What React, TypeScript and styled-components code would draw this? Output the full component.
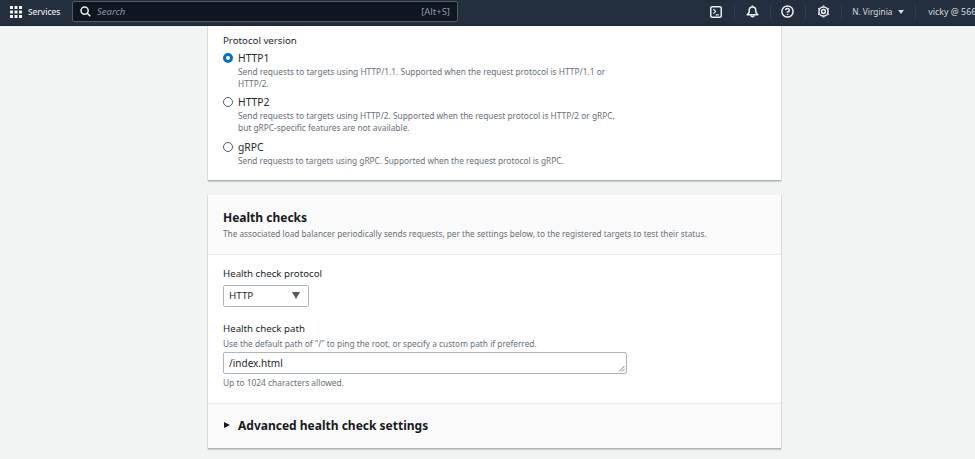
import React from "react";
import styled, { createGlobalStyle } from "styled-components";

const GlobalStyle = createGlobalStyle`
  html, body {
    margin: 0;
    padding: 0;
    height: 100%;
    overflow: hidden;
    background: #f2f3f3;
    font-family: "Noto Sans", "Open Sans", sans-serif;
  }
  * { box-sizing: border-box; }
`;

const Page = styled.div`
  width: 975px;
  height: 459px;
  overflow: hidden;
  display: flex;
  flex-direction: column;
`;

const NavBar = styled.header`
  height: 26px;
  flex: none;
  background: #232f3e;
  display: flex;
  align-items: center;
  white-space: nowrap;
  overflow: hidden;
  padding-bottom: 2px;
  border-bottom: 1px solid #1b2633;
`;

const ServicesButton = styled.div`
  flex: none;
  display: flex;
  align-items: center;
  gap: 6px;
  width: 72px;
  padding-left: 10px;
  color: #eaeded;
  font-size: 8.3px;
  font-weight: 500;
`;

const SearchBox = styled.div`
  flex: none;
  width: 386px;
  height: 21px;
  background: #10161f;
  border: 1px solid #545b64;
  border-radius: 2px;
  display: flex;
  align-items: center;
  padding: 0 7px;
  color: #8d99a8;
  font-size: 9.5px;
`;

const SearchHint = styled.span`
  font-style: italic;
  margin-left: 6px;
  flex: 1;
`;

const NavIcons = styled.div`
  flex: none;
  display: flex;
  align-items: center;
  margin-left: 241px;
`;

const NavIcon = styled.div`
  width: 35.8px;
  height: 16px;
  display: flex;
  align-items: center;
  justify-content: center;
  border-right: 1px solid #2f3c4c;
  color: #eaeded;
`;

const Region = styled.div`
  flex: none;
  display: flex;
  align-items: center;
  gap: 5px;
  width: 74px;
  padding-left: 10px;
  height: 16px;
  color: #d5dbdb;
  font-size: 8.3px;
  border-right: 1px solid #2f3c4c;
`;

const Account = styled.div`
  flex: none;
  color: #d5dbdb;
  font-size: 8.9px;
  margin-left: 12px;
`;

const Caret = styled.span`
  width: 0;
  height: 0;
  border-left: 3.5px solid transparent;
  border-right: 3.5px solid transparent;
  border-top: 4.5px solid #d5dbdb;
`;

const Content = styled.main`
  flex: 1;
  padding-left: 208px;
  width: 781px;
  display: flex;
  flex-direction: column;
  gap: 14px;
`;

const Panel = styled.section`
  background: #fff;
  border-bottom: 1px solid #aab7b8;
  box-shadow: 0 1px 1px rgba(0, 28, 36, 0.16), -1px 0 0 rgba(0, 28, 36, 0.07), 1px 0 0 rgba(0, 28, 36, 0.07);
`;

const ProtocolPanel = styled(Panel)`
  height: 155px;
  padding: 8px 15px 0;
`;

const FieldLabel = styled.div`
  color: #22262c;
  font-size: 9.7px;
  line-height: 13px;
`;

const RadioRow = styled.div<{ $gap: number }>`
  display: flex;
  gap: 5px;
  margin-top: ${(p) => p.$gap}px;
`;

const RadioMark = styled.span<{ $checked?: boolean }>`
  width: 10px;
  height: 10px;
  margin-top: 1px;
  flex: none;
  border-radius: 50%;
  background: #fff;
  border: ${(p) => (p.$checked ? "3px solid #0073bb" : "1px solid #545b64")};
`;

const RadioTitle = styled.div`
  color: #22262c;
  font-size: 10.3px;
  line-height: 13px;
  margin-bottom: 1px;
`;

const HelpText = styled.div<{ $size?: number }>`
  color: #687078;
  font-size: ${(p) => p.$size ?? 8.38}px;
  line-height: 12px;
  white-space: nowrap;
`;

const HeaderHelp = styled(HelpText)`
  font-size: 8.25px;
  margin-top: 2px;
`;

const PathHelp = styled(HelpText)`
  margin-top: 3px;
  font-size: 8.32px;
`;

const HealthPanel = styled(Panel)`
  height: 254px;
  display: flex;
  flex-direction: column;
`;

const PanelHeader = styled.div`
  height: 60px;
  flex: none;
  background: #fafafa;
  border-bottom: 1px solid #eaeded;
  padding: 15px 15px 0;
`;

const PanelTitle = styled.h2`
  margin: 0;
  color: #16191f;
  font-size: 12px;
  line-height: 16px;
  font-weight: 700;
`;

const PanelBody = styled.div`
  flex: 1;
  padding: 12px 15px 0;
`;

const SelectBox = styled.div`
  width: 86px;
  height: 22px;
  margin-top: 5px;
  border: 1px solid #aab7b8;
  border-radius: 2px;
  display: flex;
  align-items: center;
  justify-content: space-between;
  padding: 0 8px 1px 5px;
  color: #22262c;
  font-size: 9.8px;
`;

const SelectCaret = styled.span`
  width: 0;
  height: 0;
  border-left: 4px solid transparent;
  border-right: 4px solid transparent;
  border-top: 7px solid #545b64;
`;

const PathField = styled.div`
  margin-top: 15px;
`;

const TextArea = styled.div`
  position: relative;
  width: 404px;
  height: 22px;
  margin: 2px 0 3px;
  border: 1px solid #aab7b8;
  border-radius: 2px;
  padding: 0 5px;
  display: flex;
  align-items: center;
  color: #22262c;
  font-size: 10px;
`;

const ResizeGrip = styled.svg`
  position: absolute;
  right: 1px;
  bottom: 1px;
`;

const PanelFooter = styled.div`
  height: 45px;
  flex: none;
  background: #fafafa;
  border-top: 1px solid #eaeded;
  display: flex;
  align-items: center;
  gap: 8px;
  padding: 0 0 2px 16px;
`;

const FooterCaret = styled.span`
  width: 0;
  height: 0;
  border-top: 3.5px solid transparent;
  border-bottom: 3.5px solid transparent;
  border-left: 6px solid #16191f;
`;

const FooterTitle = styled.div`
  color: #16191f;
  font-size: 12px;
  font-weight: 700;
`;

const Strokes = { fill: "none", stroke: "currentColor", strokeWidth: 1.5 };

const GridIcon = () => (
  <svg width="12" height="12" viewBox="0 0 12 12" fill="#f2f3f3">
    {[0, 4.5, 9].map((y) =>
      [0, 4.5, 9].map((x) => <rect key={`${x}-${y}`} x={x} y={y} width="3" height="3" />)
    )}
  </svg>
);

const SearchIcon = () => (
  <svg width="11" height="11" viewBox="0 0 11 11" {...Strokes} stroke="#eaeded">
    <circle cx="4.6" cy="4.6" r="3.6" />
    <path d="M7.3 7.3 10.3 10.3" />
  </svg>
);

const ShellIcon = () => (
  <svg width="12" height="12" viewBox="0 0 12 12" {...Strokes}>
    <rect x="0.75" y="0.75" width="10.5" height="10.5" rx="1.5" />
    <path d="M3.4 3.2 5.6 5.4 3.4 7.6M5.8 8.8H8.8" strokeWidth="1.2" />
  </svg>
);

const BellIcon = () => (
  <svg width="13" height="13" viewBox="0 0 13 13" {...Strokes}>
    <path d="M1.2 9.8H11.8L9.8 7.2V5.2A3.3 3.3 0 0 0 3.2 5.2V7.2Z" strokeLinejoin="round" />
    <path d="M6.5 0.4V1.9M5 10.2A1.5 1.5 0 0 0 8 10.2" />
  </svg>
);

const HelpIcon = () => (
  <svg width="13" height="13" viewBox="0 0 13 13" {...Strokes}>
    <circle cx="6.5" cy="6.5" r="5.6" />
    <path d="M4.7 5.1A1.8 1.8 0 1 1 6.5 7V7.8" />
    <path d="M6.5 8.8V10" />
  </svg>
);

const GearIcon = () => (
  <svg width="13" height="13" viewBox="0 0 13 13" {...Strokes}>
    <circle cx="6.5" cy="6.5" r="4.6" />
    <circle cx="6.5" cy="6.5" r="1.9" />
    <path d="M6.5 0.4V1.8M6.5 11.2V12.6M1.2 3.4 2.4 4.1M10.6 8.9 11.8 9.6M1.2 9.6 2.4 8.9M10.6 4.1 11.8 3.4" />
  </svg>
);

const protocols = [
  {
    name: "HTTP1",
    checked: true,
    gap: 5,
    size: 8.38,
    help: [
      "Send requests to targets using HTTP/1.1. Supported when the request protocol is HTTP/1.1 or",
      "HTTP/2.",
    ],
  },
  {
    name: "HTTP2",
    gap: 6,
    size: 8.35,
    help: [
      "Send requests to targets using HTTP/2. Supported when the request protocol is HTTP/2 or gRPC,",
      "but gRPC-specific features are not available.",
    ],
  },
  {
    name: "gRPC",
    gap: 7,
    size: 8.3,
    help: ["Send requests to targets using gRPC. Supported when the request protocol is gRPC."],
  },
];

const App: React.FC = () => {
  return (
    <Page>
      <GlobalStyle />
      <NavBar>
        <ServicesButton>
          <GridIcon />
          Services
        </ServicesButton>
        <SearchBox>
          <SearchIcon />
          <SearchHint>Search</SearchHint>
          [Alt+S]
        </SearchBox>
        <NavIcons>
          <NavIcon><ShellIcon /></NavIcon>
          <NavIcon><BellIcon /></NavIcon>
          <NavIcon><HelpIcon /></NavIcon>
          <NavIcon><GearIcon /></NavIcon>
        </NavIcons>
        <Region>
          N. Virginia
          <Caret />
        </Region>
        <Account>vicky @ 566</Account>
      </NavBar>

      <Content>
        <ProtocolPanel>
          <FieldLabel>Protocol version</FieldLabel>
          {protocols.map((protocol) => (
            <RadioRow key={protocol.name} $gap={protocol.gap}>
              <RadioMark $checked={protocol.checked} />
              <div>
                <RadioTitle>{protocol.name}</RadioTitle>
                {protocol.help.map((line) => (
                  <HelpText key={line} $size={protocol.size}>{line}</HelpText>
                ))}
              </div>
            </RadioRow>
          ))}
        </ProtocolPanel>

        <HealthPanel>
          <PanelHeader>
            <PanelTitle>Health checks</PanelTitle>
            <HeaderHelp>
              The associated load balancer periodically sends requests, per the settings below, to the registered targets to test their status.
            </HeaderHelp>
          </PanelHeader>
          <PanelBody>
            <FieldLabel>Health check protocol</FieldLabel>
            <SelectBox>
              HTTP
              <SelectCaret />
            </SelectBox>
            <PathField>
              <FieldLabel>Health check path</FieldLabel>
              <PathHelp>Use the default path of "/" to ping the root, or specify a custom path if preferred.</PathHelp>
              <TextArea>
                /index.html
                <ResizeGrip width="7" height="7" viewBox="0 0 7 7" fill="none" stroke="#545b64" strokeWidth="0.8">
                  <path d="M1 6.5 6.5 1M4 6.5 6.5 4" />
                </ResizeGrip>
              </TextArea>
              <HelpText>Up to 1024 characters allowed.</HelpText>
            </PathField>
          </PanelBody>
          <PanelFooter>
            <FooterCaret />
            <FooterTitle>Advanced health check settings</FooterTitle>
          </PanelFooter>
        </HealthPanel>
      </Content>
    </Page>
  );
};

export default App;
